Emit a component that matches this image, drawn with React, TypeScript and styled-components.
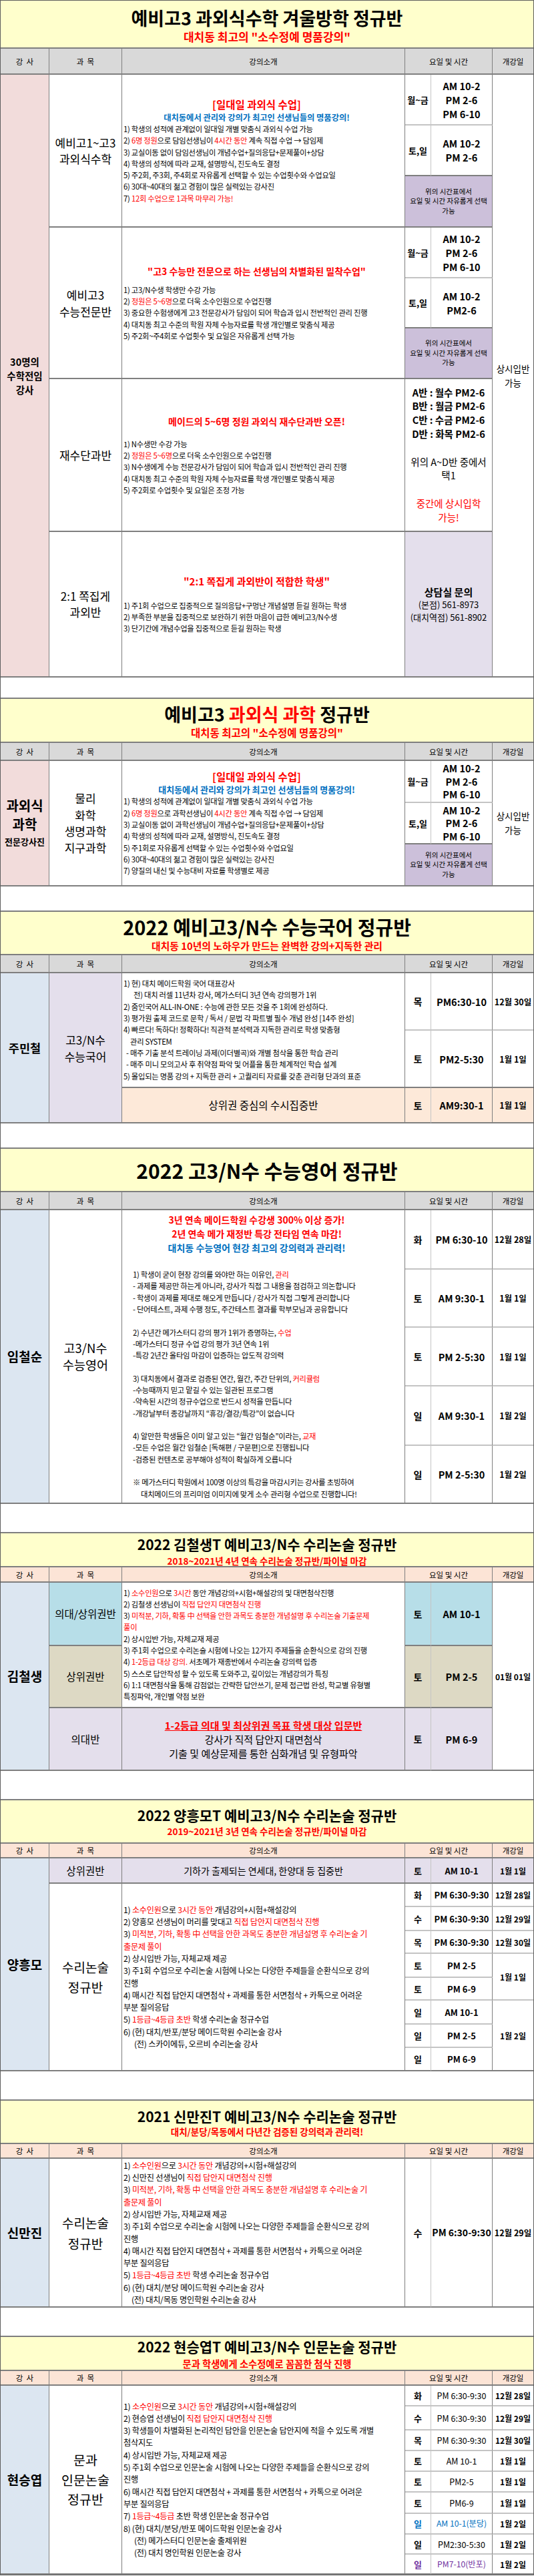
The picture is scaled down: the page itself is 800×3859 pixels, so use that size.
import { FC } from "react";
import styled, { createGlobalStyle } from "styled-components";

const LINE = "#7f7f7f";
const SOFT = "#c4c4c4";
const RED = "#ff0000";
const BLUE = "#0070c0";
const PURPLE = "#7030a0";

const YELLOW = "#ffffcc";
const GREY = "#d9d9d9";
const PEACH = "#fce4d6";
const PINK = "#f2dcdb";
const SKY = "#dce6f1";
const LAVENDER = "#e4dfec";
const VIOLET = "#ccc0da";
const AQUA = "#b7dee8";
const KHAKI = "#ddd9c4";
const SALMON = "#fde9d9";

const GlobalStyle = createGlobalStyle`
  * { box-sizing: border-box; }
  html, body { margin: 0; padding: 0; background: #ffffff; }
  body {
    font-family: "Noto Sans CJK KR", "Noto Sans", "Liberation Sans", sans-serif;
    color: #000;
  }
`;

const Page = styled.div`
  width: 800px;
  border: 1px solid #5f5f5f;
  display: flex;
  flex-direction: column;
`;

const Banner = styled.div<{ $h: number; $pt: number }>`
  height: ${(p) => p.$h}px;
  padding-top: ${(p) => p.$pt}px;
  background: ${YELLOW};
  border-bottom: 2px solid ${LINE};
  display: flex;
  flex-direction: column;
  align-items: center;
`;

const Title = styled.div<{ $size: number; $lh: number }>`
  font-size: ${(p) => p.$size}px;
  line-height: ${(p) => p.$lh}px;
  font-weight: 700;
  white-space: nowrap;
`;

const Subtitle = styled.div<{ $size: number; $lh: number; $gap?: number }>`
  margin-top: ${(p) => p.$gap ?? 0}px;
  font-size: ${(p) => p.$size}px;
  line-height: ${(p) => p.$lh}px;
  font-weight: 700;
  color: ${RED};
  white-space: nowrap;
`;

const Spacer = styled.div<{ $h: number }>`
  height: ${(p) => p.$h}px;
  background: #ffffff;
  border-bottom: 2px solid ${LINE};
`;

const Sheet = styled.div<{ $rows: string }>`
  display: grid;
  grid-template-columns: 73px 109px 424px 39px 92px 61px;
  grid-template-rows: ${(p) => p.$rows};
`;

interface CellProps {
  $r: string;
  $c?: string;
  $bg?: string;
  $soft?: boolean;
}

const Cell = styled.div<CellProps>`
  grid-row: ${(p) => p.$r};
  background: ${(p) => p.$bg ?? "#ffffff"};
  border-right: 1px solid ${LINE};
  border-bottom: 2px solid ${(p) => (p.$soft ? SOFT : LINE)};
  display: flex;
  flex-direction: column;
  align-items: center;
  justify-content: center;
  text-align: center;
  overflow: hidden;
  min-width: 0;
  min-height: 0;
`;

const HeadCell = styled(Cell)`
  grid-column: ${(p) => p.$c ?? "1"};
  font-size: 11.5px;
  white-space: pre;
  ${(p) => (p.$c === "6" ? "border-right: none;" : "")}
`;

const TeacherCell = styled(Cell)<{ $size?: number; $lh?: number }>`
  grid-column: 1;
  font-size: ${(p) => p.$size ?? 19}px;
  line-height: ${(p) => p.$lh ?? 26}px;
  font-weight: 700;
  white-space: nowrap;
`;

const SmallLine = styled.div`
  font-size: 13px;
  line-height: 24px;
`;

const SubjectCell = styled(Cell)<{ $size?: number; $lh?: number }>`
  grid-column: ${(p) => p.$c ?? "2"};
  font-size: ${(p) => p.$size ?? 19}px;
  line-height: ${(p) => p.$lh ?? 25}px;
  white-space: nowrap;
`;

const IntroCell = styled(Cell)<{ $size?: number; $lh?: number }>`
  grid-column: 3;
  align-items: flex-start;
  text-align: left;
  padding-left: 2px;
  font-size: ${(p) => p.$size ?? 11.3}px;
  line-height: ${(p) => p.$lh ?? 17.3}px;
  letter-spacing: -0.25px;
`;

const NoticeCell = styled(Cell)<{ $size?: number; $lh?: number }>`
  grid-column: 3;
  font-size: ${(p) => p.$size ?? 15}px;
  line-height: ${(p) => p.$lh ?? 21}px;
  white-space: nowrap;
`;

const DayCell = styled(Cell)<{ $color?: string; $size?: number }>`
  grid-column: 4;
  border-right: 1px solid ${SOFT};
  font-size: ${(p) => p.$size ?? 14}px;
  font-weight: 700;
  color: ${(p) => p.$color ?? "#000"};
  white-space: nowrap;
`;

const TimeCell = styled(Cell)<{ $size?: number; $lh?: number; $weight?: number; $color?: string }>`
  grid-column: 5;
  font-size: ${(p) => p.$size ?? 14.5}px;
  line-height: ${(p) => p.$lh ?? 21}px;
  font-weight: ${(p) => p.$weight ?? 700};
  color: ${(p) => p.$color ?? "#000"};
  white-space: nowrap;
`;

const DateCell = styled(Cell)<{ $size?: number; $lh?: number; $weight?: number }>`
  grid-column: 6;
  border-right: none;
  font-size: ${(p) => p.$size ?? 12.5}px;
  line-height: ${(p) => p.$lh ?? 21}px;
  font-weight: ${(p) => p.$weight ?? 700};
  white-space: nowrap;
`;

const NoteCell = styled(Cell)`
  grid-column: 4 / span 2;
  background: ${(p) => p.$bg ?? VIOLET};
  font-size: 10.5px;
  line-height: 14.5px;
  white-space: nowrap;
`;

const ScheduleCell = styled(Cell)`
  grid-column: 4 / span 2;
  font-size: 14.5px;
  line-height: 20.8px;
  white-space: nowrap;
`;

const ContactCell = styled(Cell)`
  grid-column: 4 / span 2;
  font-size: 13px;
  line-height: 19px;
  white-space: nowrap;
`;

const Strong = styled.div<{ $size?: number }>`
  font-weight: 700;
  ${(p) => (p.$size ? `font-size: ${p.$size}px;` : "")}
`;

const Heading = styled.div<{ $size: number; $lh: number; $color: string; $gap?: number }>`
  align-self: stretch;
  padding-right: 22px;
  margin-bottom: ${(p) => p.$gap ?? 0}px;
  color: ${(p) => p.$color};
  font-size: ${(p) => p.$size}px;
  line-height: ${(p) => p.$lh}px;
  font-weight: 700;
  letter-spacing: 0;
  text-align: center;
  white-space: nowrap;
`;

const List = styled.div<{ $indent?: number }>`
  padding-left: ${(p) => p.$indent ?? 0}px;
`;

const Line = styled.div<{ $indent?: number }>`
  padding-left: ${(p) => p.$indent ?? 0}px;
  white-space: nowrap;
`;

const Blank = styled.div<{ $h: number }>`
  height: ${(p) => p.$h}px;
`;

const R = styled.span`
  color: ${RED};
`;

const Mark = styled.span`
  color: ${RED};
  font-weight: 700;
  text-decoration: underline;
`;

const HeadRow: FC<{ tone: string }> = ({ tone }) => (
  <>
    <HeadCell $r="1" $c="1" $bg={tone}>강  사</HeadCell>
    <HeadCell $r="1" $c="2" $bg={tone}>과  목</HeadCell>
    <HeadCell $r="1" $c="3" $bg={tone}>강의소개</HeadCell>
    <HeadCell $r="1" $c="4 / span 2" $bg={tone}>요일 및 시간</HeadCell>
    <HeadCell $r="1" $c="6" $bg={tone}>개강일</HeadCell>
  </>
);

const FreeNote: FC<{ row: string }> = ({ row }) => (
  <NoteCell $r={row}>
    <span>
      위의 시간표에서
      <br />
      요일 및 시간 자유롭게 선택
      <br />
      가능
    </span>
  </NoteCell>
);

const MathSection: FC = () => (
  <>
    <Banner $h={72} $pt={9}>
      <Title $size={27} $lh={34}>예비고3 과외식수학 겨울방학 정규반</Title>
      <Subtitle $size={17} $lh={21}>대치동 최고의 "소수정예 명품강의"</Subtitle>
    </Banner>
    <Sheet $rows="39px 76px 76px 77px 76px 75px 76px 229px 218px">
      <HeadRow tone={GREY} />
      <TeacherCell $r="2 / span 8" $bg={PINK} $size={14.5} $lh={21}>
        <span>30명의<br />수학전임<br />강사</span>
      </TeacherCell>

      <SubjectCell $r="2 / span 3" $size={17} $lh={24}>
        <span>예비고1~고3<br />과외식수학</span>
      </SubjectCell>
      <IntroCell $r="2 / span 3">
        <Heading $size={15.5} $lh={22} $color={RED}>[일대일 과외식 수업]</Heading>
        <Heading $size={12.3} $lh={18} $color={BLUE}>대치동에서 관리와 강의가 최고인 선생님들의 명품강의!</Heading>
        <Line>1) 학생의 성적에 관계없이 일대일 개별 맞춤식 과외식 수업 가능</Line>
        <Line>2) <R>6명 정원</R>으로 담임선생님이 <R>4시간 동안</R> 계속 직접 수업 → 담임제</Line>
        <Line>3) 교실이동 없이 담임선생님이 개념수업+질의응답+문제풀이+상담</Line>
        <Line>4) 학생의 성적에 따라 교재, 설명방식, 진도속도 결정</Line>
        <Line>5) 주2회, 주3회, 주4회로 자유롭게 선택할 수 있는 수업횟수와 수업요일</Line>
        <Line>6) 30대~40대의 젊고 경험이 많은 실력있는 강사진</Line>
        <Line>7) <R>12회 수업으로 1과목 마무리 가능!</R></Line>
      </IntroCell>
      <DayCell $r="2" $soft $size={13}>월~금</DayCell>
      <TimeCell $r="2" $soft><span>AM 10-2<br />PM 2-6<br />PM 6-10</span></TimeCell>
      <DayCell $r="3" $size={13}>토,일</DayCell>
      <TimeCell $r="3"><span>AM 10-2<br />PM 2-6</span></TimeCell>
      <FreeNote row="4" />

      <SubjectCell $r="5 / span 3" $size={17} $lh={25}>
        <span>예비고3<br />수능전문반</span>
      </SubjectCell>
      <IntroCell $r="5 / span 3">
        <Heading $size={14} $lh={22} $color={RED} $gap={9}>"고3 수능만 전문으로 하는 선생님의 차별화된 밀착수업"</Heading>
        <Line>1) 고3/N수생 학생만 수강 가능</Line>
        <Line>2) <R>정원은 5~6명</R>으로 더욱 소수인원으로 수업진행</Line>
        <Line>3) 중요한 수험생에게 고3 전문강사가 담임이 되어 학습과 입시 전반적인 관리 진행</Line>
        <Line>4) 대치동 최고 수준의 학원 자체 수능자료를 학생 개인별로 맞춤식 제공</Line>
        <Line>5) 주2회~주4회로 수업횟수 및 요일은 자유롭게 선택 가능</Line>
      </IntroCell>
      <DayCell $r="5" $soft $size={13}>월~금</DayCell>
      <TimeCell $r="5" $soft><span>AM 10-2<br />PM 2-6<br />PM 6-10</span></TimeCell>
      <DayCell $r="6" $size={13}>토,일</DayCell>
      <TimeCell $r="6"><span>AM 10-2<br />PM2-6</span></TimeCell>
      <FreeNote row="7" />

      <SubjectCell $r="8" $size={17}>재수단과반</SubjectCell>
      <IntroCell $r="8">
        <Heading $size={14} $lh={22} $color={RED} $gap={15}>메이드의 5~6명 정원 과외식 재수단과반 오픈!</Heading>
        <Line>1) N수생만 수강 가능</Line>
        <Line>2) <R>정원은 5~6명</R>으로 더욱 소수인원으로 수업진행</Line>
        <Line>3) N수생에게 수능 전문강사가 담임이 되어 학습과 입시 전반적인 관리 진행</Line>
        <Line>4) 대치동 최고 수준의 학원 자체 수능자료를 학생 개인별로 맞춤식 제공</Line>
        <Line>5) 주2회로 수업횟수 및 요일은 조정 가능</Line>
      </IntroCell>
      <ScheduleCell $r="8">
        <Strong>A반 : 월수 PM2-6</Strong>
        <Strong>B반 : 월금 PM2-6</Strong>
        <Strong>C반 : 수금 PM2-6</Strong>
        <Strong>D반 : 화목 PM2-6</Strong>
        <Blank $h={20.8} />
        <span>위의 A~D반 중에서<br />택1</span>
        <Blank $h={20.8} />
        <R>중간에 상시입학<br />가능!</R>
      </ScheduleCell>

      <SubjectCell $r="9" $size={17} $lh={24}>
        <span>2:1 쪽집게<br />과외반</span>
      </SubjectCell>
      <IntroCell $r="9">
        <Heading $size={15} $lh={22} $color={RED} $gap={17}>"2:1 쪽집게 과외반이 적합한 학생"</Heading>
        <Line>1) 주1회 수업으로 집중적으로 질의응답+구멍난 개념설명 듣길 원하는 학생</Line>
        <Line>2) 부족한 부분을 집중적으로 보완하기 위한 마음이 급한 예비고3/N수생</Line>
        <Line>3) 단기간에 개념수업을 집중적으로 듣길 원하는 학생</Line>
      </IntroCell>
      <ContactCell $r="9" $bg={LAVENDER}>
        <Strong $size={15}>상담실 문의</Strong>
        <span>(본점) 561-8973<br />(대치역점) 561-8902</span>
      </ContactCell>

      <DateCell $r="2 / span 8" $size={13.5} $weight={400}>
        <span>상시입반<br />가능</span>
      </DateCell>
    </Sheet>
  </>
);

const ScienceSection: FC = () => (
  <>
    <Banner $h={66} $pt={6}>
      <Title $size={27} $lh={34}>예비고3 <R>과외식 과학</R> 정규반</Title>
      <Subtitle $size={15.5} $lh={21}>대치동 최고의 "소수정예 명품강의"</Subtitle>
    </Banner>
    <Sheet $rows="27px 63px 62px 63px">
      <HeadRow tone={GREY} />
      <TeacherCell $r="2 / span 3" $bg={PINK} $size={20} $lh={28}>
        <span>과외식<br />과학</span>
        <SmallLine>전문강사진</SmallLine>
      </TeacherCell>
      <SubjectCell $r="2 / span 3" $size={17} $lh={24.5}>
        <span>물리<br />화학<br />생명과학<br />지구과학</span>
      </SubjectCell>
      <IntroCell $r="2 / span 3">
        <Heading $size={15.5} $lh={22} $color={RED}>[일대일 과외식 수업]</Heading>
        <Heading $size={13} $lh={18} $color={BLUE}>대치동에서 관리와 강의가 최고인 선생님들의 명품강의!</Heading>
        <Line>1) 학생의 성적에 관계없이 일대일 개별 맞춤식 과외식 수업 가능</Line>
        <Line>2) <R>6명 정원</R>으로 과학선생님이 <R>4시간 동안</R> 계속 직접 수업 → 담임제</Line>
        <Line>3) 교실이동 없이 과학선생님이 개념수업+질의응답+문제풀이+상담</Line>
        <Line>4) 학생의 성적에 따라 교재, 설명방식, 진도속도 결정</Line>
        <Line>5) 주1회로 자유롭게 선택할 수 있는 수업횟수와 수업요일</Line>
        <Line>6) 30대~40대의 젊고 경험이 많은 실력있는 강사진</Line>
        <Line>7) 양질의 내신 및 수능대비 자료를 학생별로 제공</Line>
      </IntroCell>
      <DayCell $r="2" $soft $size={13}>월~금</DayCell>
      <TimeCell $r="2" $soft $lh={19.6}><span>AM 10-2<br />PM 2-6<br />PM 6-10</span></TimeCell>
      <DayCell $r="3" $size={13}>토,일</DayCell>
      <TimeCell $r="3" $lh={19.6}><span>AM 10-2<br />PM 2-6<br />PM 6-10</span></TimeCell>
      <FreeNote row="4" />
      <DateCell $r="2 / span 3" $size={13.5} $weight={400}>
        <span>상시입반<br />가능</span>
      </DateCell>
    </Sheet>
  </>
);

const KoreanSection: FC = () => (
  <>
    <Banner $h={65} $pt={4}>
      <Title $size={29} $lh={36}>2022 예비고3/N수 수능국어 정규반</Title>
      <Subtitle $size={14.8} $lh={21}>대치동 10년의 노하우가 만드는 완벽한 강의+지독한 관리</Subtitle>
    </Banner>
    <Sheet $rows="27px 86px 86px 53px">
      <HeadRow tone={GREY} />
      <TeacherCell $r="2 / span 3" $bg={SKY} $size={17.5}>주민철</TeacherCell>
      <SubjectCell $r="2 / span 3" $bg={LAVENDER} $size={17} $lh={25}>
        <span>고3/N수<br />수능국어</span>
      </SubjectCell>
      <IntroCell $r="2 / span 2">
        <Line>1) 현) 대치 메이드학원 국어 대표강사</Line>
        <Line $indent={15}>전) 대치 러셀 11년차 강사, 메가스터디 3년 연속 강의평가 1위</Line>
        <Line>2) 줌인국어 ALL-IN-ONE : 수능에 관한 모든 것을 주 1회에 완성하다.</Line>
        <Line>3) 평가원 출제 코드로 문학 / 독서 / 문법 각 파트별 필수 개념 완성 [14주 완성]</Line>
        <Line>4) 빠르다! 독하다! 정확하다! 직관적 분석력과 지독한 관리로 학생 맞춤형</Line>
        <Line $indent={10}>관리 SYSTEM</Line>
        <Line $indent={4}>- 매주 기출 분석 트레이닝 과제(이더별곡)와 개별 첨삭을 통한 학습 관리</Line>
        <Line $indent={4}>- 매주 미니 모의고사 후 취약점 파악 및 어플을 통한 체계적인 학습 설계</Line>
        <Line>5) 몰입되는 명품 강의 + 지독한 관리 + 고퀄리티 자료를 갖춘 관리형 단과의 표준</Line>
      </IntroCell>
      <DayCell $r="2" $soft>목</DayCell>
      <TimeCell $r="2" $soft>PM6:30-10</TimeCell>
      <DateCell $r="2" $soft>12월 30일</DateCell>
      <DayCell $r="3">토</DayCell>
      <TimeCell $r="3">PM2-5:30</TimeCell>
      <DateCell $r="3">1월 1일</DateCell>
      <NoticeCell $r="4" $bg={SALMON} $size={15.5}>상위권 중심의 수시집중반</NoticeCell>
      <DayCell $r="4" $bg={SALMON}>토</DayCell>
      <TimeCell $r="4" $bg={SALMON}>AM9:30-1</TimeCell>
      <DateCell $r="4" $bg={SALMON}>1월 1일</DateCell>
    </Sheet>
  </>
);

const EnglishSection: FC = () => (
  <>
    <Banner $h={65} $pt={13}>
      <Title $size={30} $lh={38}>2022 고3/N수 수능영어 정규반</Title>
    </Banner>
    <Sheet $rows="27px 89px 87px 88px 89px 87px">
      <HeadRow tone={GREY} />
      <TeacherCell $r="2 / span 5" $bg={SKY}>임철순</TeacherCell>
      <SubjectCell $r="2 / span 5" $size={18.5} $lh={25}>
        <span>고3/N수<br />수능영어</span>
      </SubjectCell>
      <IntroCell $r="2 / span 5">
        <Heading $size={14} $lh={21} $color={RED}>3년 연속 메이드학원 수강생 300% 이상 증가!</Heading>
        <Heading $size={14} $lh={21} $color={RED}>2년 연속 메가 재정반 특강 전타임 연속 마감!</Heading>
        <Heading $size={14} $lh={21} $color={BLUE} $gap={21}>대치동 수능영어 현강 최고의 강의력과 관리력!</Heading>
        <List $indent={14}>
          <Line>1) 학생이 굳이 현장 강의를 와야만 하는 이유인, <R>관리</R></Line>
          <Line>- 과제를 제공만 하는게 아니라, 강사가 직접 그 내용을 점검하고 의논합니다</Line>
          <Line>- 학생이 과제를 제대로 해오게 만듭니다 / 강사가 직접 그렇게 관리합니다</Line>
          <Line>- 단어테스트, 과제 수행 정도, 주간테스트 결과를 학부모님과 공유합니다</Line>
          <Blank $h={17.3} />
          <Line>2) 수년간 메가스터디 강의 평가 1위가 증명하는, <R>수업</R></Line>
          <Line>-메가스터디 정규 수업 강의 평가 3년 연속 1위</Line>
          <Line>-특강 2년간 올타임 마감이 입증하는 압도적 강의력</Line>
          <Blank $h={17.3} />
          <Line>3) 대치동에서 결과로 검증된 연간, 월간, 주간 단위의, <R>커리큘럼</R></Line>
          <Line>-수능때까지 믿고 맡길 수 있는 일관된 프로그램</Line>
          <Line>-약속된 시간의 정규수업으로 반드시 성적을 만듭니다</Line>
          <Line>-개강날부터 종강날까지 “휴강/결강/특강”이 없습니다</Line>
          <Blank $h={17.3} />
          <Line>4) 알만한 학생들은 이미 알고 있는 “월간 임철순”이라는, <R>교재</R></Line>
          <Line>-모든 수업은 월간 임철순 [독해편 / 구문편]으로 진행됩니다</Line>
          <Line>-검증된 컨텐츠로 공부해야 성적이 확실하게 오릅니다</Line>
          <Blank $h={17.3} />
          <Line>※ 메가스터디 학원에서 100명 이상의 특강을 마감시키는 강사를 초빙하여</Line>
          <Line $indent={12}>대치메이드의 프리미엄 이미지에 맞게 소수 관리형 수업으로 진행합니다!</Line>
        </List>
      </IntroCell>
      <DayCell $r="2" $soft>화</DayCell>
      <TimeCell $r="2" $soft>PM 6:30-10</TimeCell>
      <DateCell $r="2" $soft>12월 28일</DateCell>
      <DayCell $r="3" $soft>토</DayCell>
      <TimeCell $r="3" $soft>AM 9:30-1</TimeCell>
      <DateCell $r="3" $soft>1월 1일</DateCell>
      <DayCell $r="4" $soft>토</DayCell>
      <TimeCell $r="4" $soft>PM 2-5:30</TimeCell>
      <DateCell $r="4" $soft>1월 1일</DateCell>
      <DayCell $r="5" $soft>일</DayCell>
      <TimeCell $r="5" $soft>AM 9:30-1</TimeCell>
      <DateCell $r="5" $soft>1월 2일</DateCell>
      <DayCell $r="6">일</DayCell>
      <TimeCell $r="6">PM 2-5:30</TimeCell>
      <DateCell $r="6">1월 2일</DateCell>
    </Sheet>
  </>
);

const KimSection: FC = () => (
  <>
    <Banner $h={51} $pt={3}>
      <Title $size={21} $lh={26}>2022 김철생T 예비고3/N수 수리논술 정규반</Title>
      <Subtitle $size={13.5} $lh={20} $gap={2}>2018~2021년 4년 연속 수리논술 정규반/파이널 마감</Subtitle>
    </Banner>
    <Sheet $rows="23px 95px 93px 94px">
      <HeadRow tone={PEACH} />
      <TeacherCell $r="2 / span 3" $bg={SKY}>김철생</TeacherCell>
      <SubjectCell $r="2" $bg={AQUA} $size={15.5}>의대/상위권반</SubjectCell>
      <SubjectCell $r="3" $bg={KHAKI} $size={15.5}>상위권반</SubjectCell>
      <SubjectCell $r="4" $bg={LAVENDER} $size={15.5}>의대반</SubjectCell>
      <IntroCell $r="2 / span 2">
        <Line>1) <R>소수인원</R>으로 <R>3시간</R> 동안 개념강의+시험+해설강의 및 대면첨삭진행</Line>
        <Line>2) 김철생 선생님이 <R>직접 답안지 대면첨삭 진행</R></Line>
        <Line>3) <R>미적분, 기하, 확통 中 선택을 안한 과목도 충분한 개념설명 후 수리논술 기출문제</R></Line>
        <Line><R>풀이</R></Line>
        <Line>2) 상시입반 가능, 자체교재 제공</Line>
        <Line>3) 주1회 수업으로 수리논술 시험에 나오는 12가지 주제들을 순환식으로 강의 진행</Line>
        <Line>4) <R>1-2등급 대상 강의.</R> 서초메가 재종반에서 수리논술 강의력 입증</Line>
        <Line>5) 스스로 답안작성 할 수 있도록 도와주고, 깊이있는 개념강의가 특징</Line>
        <Line>6) 1:1 대면첨삭을 통해 감점없는 간략한 답안쓰기, 문제 접근법 완성, 학교별 유형별</Line>
        <Line>특징파악, 개인별 약점 보완</Line>
      </IntroCell>
      <NoticeCell $r="4" $bg={LAVENDER} $size={15}>
        <Mark>1-2등급 의대 및 최상위권 목표 학생 대상 입문반</Mark>
        <span>강사가 직적 답안지 대면첨삭</span>
        <span>기출 및 예상문제를 통한 심화개념 및 유형파악</span>
      </NoticeCell>
      <DayCell $r="2" $bg={AQUA}>토</DayCell>
      <TimeCell $r="2" $bg={AQUA}>AM 10-1</TimeCell>
      <DayCell $r="3" $bg={KHAKI}>토</DayCell>
      <TimeCell $r="3" $bg={KHAKI}>PM 2-5</TimeCell>
      <DayCell $r="4" $bg={LAVENDER}>토</DayCell>
      <TimeCell $r="4" $bg={LAVENDER}>PM 6-9</TimeCell>
      <DateCell $r="2 / span 3" $size={12}>01월 01일</DateCell>
    </Sheet>
  </>
);

const YangSection: FC = () => (
  <>
    <Banner $h={65} $pt={9}>
      <Title $size={21} $lh={26}>2022 양흥모T 예비고3/N수 수리논술 정규반</Title>
      <Subtitle $size={13.5} $lh={20} $gap={1}>2019~2021년 3년 연속 수리논술 정규반/파이널 마감</Subtitle>
    </Banner>
    <Sheet $rows="22px 38px 35px 36px 34px 36px 34px 36px 35px 35px">
      <HeadRow tone={PEACH} />
      <TeacherCell $r="2 / span 9" $bg={SKY}>양흥모</TeacherCell>
      <SubjectCell $r="2" $bg={LAVENDER} $size={15.5}>상위권반</SubjectCell>
      <NoticeCell $r="2" $bg={LAVENDER} $size={14}>기하가 출제되는 연세대, 한양대 등 집중반</NoticeCell>
      <DayCell $r="2" $bg={LAVENDER} $size={13}>토</DayCell>
      <TimeCell $r="2" $bg={LAVENDER} $size={13}>AM 10-1</TimeCell>
      <DateCell $r="2" $bg={LAVENDER} $size={12}>1월 1일</DateCell>

      <SubjectCell $r="3 / span 8" $size={19} $lh={30}>
        <span>수리논술<br />정규반</span>
      </SubjectCell>
      <IntroCell $r="3 / span 8" $size={12.2} $lh={18.3}>
        <Line>1) <R>소수인원</R>으로 <R>3시간 동안</R> 개념강의+시험+해설강의</Line>
        <Line>2) 양흥모 선생님이 머리를 맞대고 <R>직접 답안지 대면첨삭 진행</R></Line>
        <Line>3) <R>미적분, 기하, 확통 中 선택을 안한 과목도 충분한 개념설명 후 수리논술 기</R></Line>
        <Line><R>출문제 풀이</R></Line>
        <Line>2) 상시입반 가능, 자체교재 제공</Line>
        <Line>3) 주1회 수업으로 수리논술 시험에 나오는 다양한 주제들을 순환식으로 강의</Line>
        <Line>진행</Line>
        <Line>4) 매시간 직접 답안지 대면첨삭 + 과제를 통한 서면첨삭 + 카톡으로 어려운</Line>
        <Line>부분 질의응답</Line>
        <Line>5) <R>1등급~4등급 초반</R> 학생 수리논술 정규수업</Line>
        <Line>6) (현) 대치/반포/분당 메이드학원 수리논술 강사</Line>
        <Line $indent={16}>(전) 스카이에듀, 오르비 수리논술 강사</Line>
      </IntroCell>
      <DayCell $r="3" $soft $size={13}>화</DayCell>
      <TimeCell $r="3" $soft $size={13}>PM 6:30-9:30</TimeCell>
      <DateCell $r="3" $soft $size={12}>12월 28일</DateCell>
      <DayCell $r="4" $soft $size={13}>수</DayCell>
      <TimeCell $r="4" $soft $size={13}>PM 6:30-9:30</TimeCell>
      <DateCell $r="4" $soft $size={12}>12월 29일</DateCell>
      <DayCell $r="5" $soft $size={13}>목</DayCell>
      <TimeCell $r="5" $soft $size={13}>PM 6:30-9:30</TimeCell>
      <DateCell $r="5" $soft $size={12}>12월 30일</DateCell>
      <DayCell $r="6" $soft $size={13}>토</DayCell>
      <TimeCell $r="6" $soft $size={13}>PM 2-5</TimeCell>
      <DayCell $r="7" $soft $size={13}>토</DayCell>
      <TimeCell $r="7" $soft $size={13}>PM 6-9</TimeCell>
      <DateCell $r="6 / span 2" $soft $size={12}>1월 1일</DateCell>
      <DayCell $r="8" $soft $size={13}>일</DayCell>
      <TimeCell $r="8" $soft $size={13}>AM 10-1</TimeCell>
      <DayCell $r="9" $soft $size={13}>일</DayCell>
      <TimeCell $r="9" $soft $size={13}>PM 2-5</TimeCell>
      <DayCell $r="10" $size={13}>일</DayCell>
      <TimeCell $r="10" $size={13}>PM 6-9</TimeCell>
      <DateCell $r="8 / span 3" $size={12}>1월 2일</DateCell>
    </Sheet>
  </>
);

const ShinSection: FC = () => (
  <>
    <Banner $h={65} $pt={10}>
      <Title $size={21} $lh={26}>2021 신만진T 예비고3/N수 수리논술 정규반</Title>
      <Subtitle $size={13.5} $lh={20}>대치/분당/목동에서 다년간 검증된 강의력과 관리력!</Subtitle>
    </Banner>
    <Sheet $rows="22px 223px">
      <HeadRow tone={PEACH} />
      <TeacherCell $r="2" $bg={SKY}>신만진</TeacherCell>
      <SubjectCell $r="2" $size={19} $lh={31}>
        <span>수리논술<br />정규반</span>
      </SubjectCell>
      <IntroCell $r="2" $size={12.2} $lh={18.3}>
        <Line>1) <R>소수인원</R>으로 <R>3시간 동안</R> 개념강의+시험+해설강의</Line>
        <Line>2) 신만진 선생님이 <R>직접 답안지 대면첨삭 진행</R></Line>
        <Line>3) <R>미적분, 기하, 확통 中 선택을 안한 과목도 충분한 개념설명 후 수리논술 기</R></Line>
        <Line><R>출문제 풀이</R></Line>
        <Line>2) 상시입반 가능, 자체교재 제공</Line>
        <Line>3) 주1회 수업으로 수리논술 시험에 나오는 다양한 주제들을 순환식으로 강의</Line>
        <Line>진행</Line>
        <Line>4) 매시간 직접 답안지 대면첨삭 + 과제를 통한 서면첨삭 + 카톡으로 어려운</Line>
        <Line>부분 질의응답</Line>
        <Line>5) <R>1등급~4등급 초반</R> 학생 수리논술 정규수업</Line>
        <Line>6) (현) 대치/분당 메이드학원 수리논술 강사</Line>
        <Line $indent={12}>(전) 대치/목동 명인학원 수리논술 강사</Line>
      </IntroCell>
      <DayCell $r="2">수</DayCell>
      <TimeCell $r="2" $size={14}>PM 6:30-9:30</TimeCell>
      <DateCell $r="2">12월 29일</DateCell>
    </Sheet>
  </>
);

const HyunSection: FC = () => (
  <>
    <Banner $h={51} $pt={1}>
      <Title $size={21} $lh={26}>2022 현승엽T 예비고3/N수 인문논술 정규반</Title>
      <Subtitle $size={14.3} $lh={20} $gap={3}>문과 학생에게 소수정예로 꼼꼼한 첨삭 진행</Subtitle>
    </Banner>
    <Sheet $rows="22px 31px 36px 31px 31px 31px 32px 31px 30px 30px">
      <HeadRow tone={PEACH} />
      <TeacherCell $r="2 / span 9" $bg={SKY}>현승엽</TeacherCell>
      <SubjectCell $r="2 / span 9" $size={19.5} $lh={29.5}>
        <span>문과<br />인문논술<br />정규반</span>
      </SubjectCell>
      <IntroCell $r="2 / span 9" $size={12.2} $lh={18.3}>
        <Line>1) <R>소수인원</R>으로 <R>3시간 동안</R> 개념강의+시험+해설강의</Line>
        <Line>2) 현승엽 선생님이 <R>직접 답안지 대면첨삭 진행</R></Line>
        <Line>3) 학생들이 차별화된 논리적인 답안을 인문논술 답안지에 적을 수 있도록 개별</Line>
        <Line>첨삭지도</Line>
        <Line>4) 상시입반 가능, 자체교재 제공</Line>
        <Line>5) 주1회 수업으로 인문논술 시험에 나오는 다양한 주제들을 순환식으로 강의</Line>
        <Line>진행</Line>
        <Line>6) 매시간 직접 답안지 대면첨삭 + 과제를 통한 서면첨삭 + 카톡으로 어려운</Line>
        <Line>부분 질의응답</Line>
        <Line>7) <R>1등급~4등급</R> 초반 학생 인문논술 정규수업</Line>
        <Line>8) (현) 대치/분당/반포 메이드학원 인문논술 강사</Line>
        <Line $indent={16}>(전) 메가스터디 인문논술 출제위원</Line>
        <Line $indent={16}>(전) 대치 명인학원 인문논술 강사</Line>
      </IntroCell>
      <DayCell $r="2" $soft $size={13}>화</DayCell>
      <TimeCell $r="2" $soft $size={12.5} $weight={400}>PM 6:30-9:30</TimeCell>
      <DateCell $r="2" $soft $size={12}>12월 28일</DateCell>
      <DayCell $r="3" $soft $size={13}>수</DayCell>
      <TimeCell $r="3" $soft $size={12.5} $weight={400}>PM 6:30-9:30</TimeCell>
      <DateCell $r="3" $soft $size={12}>12월 29일</DateCell>
      <DayCell $r="4" $soft $size={13}>목</DayCell>
      <TimeCell $r="4" $soft $size={12.5} $weight={400}>PM 6:30-9:30</TimeCell>
      <DateCell $r="4" $soft $size={12}>12월 30일</DateCell>
      <DayCell $r="5" $soft $size={13}>토</DayCell>
      <TimeCell $r="5" $soft $size={12.5} $weight={400}>AM 10-1</TimeCell>
      <DateCell $r="5" $soft $size={12}>1월 1일</DateCell>
      <DayCell $r="6" $soft $size={13}>토</DayCell>
      <TimeCell $r="6" $soft $size={12.5} $weight={400}>PM2-5</TimeCell>
      <DateCell $r="6" $soft $size={12}>1월 1일</DateCell>
      <DayCell $r="7" $soft $size={13}>토</DayCell>
      <TimeCell $r="7" $soft $size={12.5} $weight={400}>PM6-9</TimeCell>
      <DateCell $r="7" $soft $size={12}>1월 1일</DateCell>
      <DayCell $r="8" $soft $size={13} $color={BLUE}>일</DayCell>
      <TimeCell $r="8" $soft $size={12.2} $weight={400} $color={BLUE}>AM 10-1(분당)</TimeCell>
      <DateCell $r="8" $soft $size={12}>1월 2일</DateCell>
      <DayCell $r="9" $soft $size={13}>일</DayCell>
      <TimeCell $r="9" $soft $size={12.5} $weight={400}>PM2:30-5:30</TimeCell>
      <DateCell $r="9" $soft $size={12}>1월 2일</DateCell>
      <DayCell $r="10" $size={13} $color={PURPLE}>일</DayCell>
      <TimeCell $r="10" $size={12.2} $weight={400} $color={PURPLE}>PM7-10(반포)</TimeCell>
      <DateCell $r="10" $size={12}>1월 2일</DateCell>
    </Sheet>
  </>
);

const App: FC = () => (
  <>
    <GlobalStyle />
    <Page>
      <MathSection />
      <Spacer $h={32} />
      <ScienceSection />
      <Spacer $h={38} />
      <KoreanSection />
      <Spacer $h={38} />
      <EnglishSection />
      <Spacer $h={44} />
      <KimSection />
      <Spacer $h={44} />
      <YangSection />
      <Spacer $h={44} />
      <ShinSection />
      <Spacer $h={44} />
      <HyunSection />
    </Page>
  </>
);

export default App;
